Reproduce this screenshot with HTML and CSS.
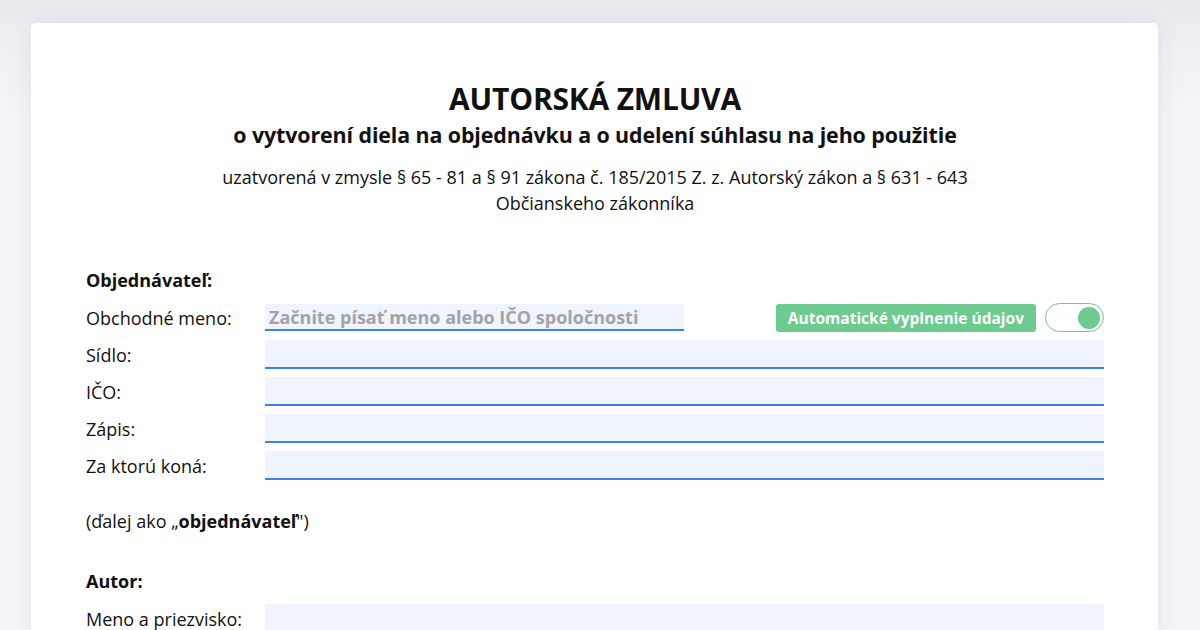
FILE: index.html
```html
<!DOCTYPE html>
<html lang="sk">
<head>
<meta charset="utf-8">
<title>Autorská zmluva</title>
<link rel="stylesheet" href="styles.css">
</head>
<body>
<div class="page">
  <main class="card">
    <header class="head">
      <h1 class="title">AUTORSKÁ ZMLUVA</h1>
      <h2 class="subtitle">o vytvorení diela na objednávku a o udelení súhlasu na jeho použitie</h2>
      <p class="law">uzatvorená v zmysle § 65 - 81 a § 91 zákona č. 185/2015 Z. z. Autorský zákon a § 631 - 643<br>Občianskeho zákonníka</p>
    </header>

    <section class="party">
      <h3 class="party-title">Objednávateľ:</h3>
      <div class="row">
        <label class="label">Obchodné meno:</label>
        <div class="row-main">
          <div class="input input-short"><span class="placeholder">Začnite písať meno alebo IČO spoločnosti</span></div>
          <div class="auto">
            <span class="auto-btn">Automatické vyplnenie údajov</span>
            <span class="toggle"><span class="knob"></span></span>
          </div>
        </div>
      </div>
      <div class="row"><label class="label">Sídlo:</label><div class="input"></div></div>
      <div class="row"><label class="label">IČO:</label><div class="input"></div></div>
      <div class="row"><label class="label">Zápis:</label><div class="input"></div></div>
      <div class="row"><label class="label">Za ktorú koná:</label><div class="input"></div></div>
      <p class="note">(ďalej ako „<b>objednávateľ</b>")</p>
    </section>

    <section class="party party-author">
      <h3 class="party-title">Autor:</h3>
      <div class="row"><label class="label">Meno a priezvisko:</label><div class="input"></div></div>
    </section>
  </main>
</div>
</body>
</html>
```

FILE: styles.css
```css
* { box-sizing: border-box; }
html, body { margin: 0; padding: 0; }
body {
  font-family: "Open Sans", "Noto Sans", sans-serif;
  color: #111;
  background: linear-gradient(to bottom, #e9eaef 0, #eeeff4 40px, #f4f5fa 120px);
  height: 630px;
  overflow: hidden;
}
.page {
  padding: 23px 42px 0 31px;
}
.card {
  background: #fff;
  border-radius: 5px;
  box-shadow: 0 0 24px rgba(40, 45, 80, 0.08);
  padding: 56px 54px 60px 55px;
  height: 620px;
  overflow: hidden;
}
.head { text-align: center; }
.title {
  margin: 0;
  font-size: 30px;
  line-height: 40px;
  font-weight: 700;
  letter-spacing: -0.2px;
}
.subtitle {
  margin: 0;
  font-size: 21.4px;
  line-height: 32px;
  font-weight: 700;
  letter-spacing: -0.1px;
}
.law {
  margin: 13px 0 0;
  font-size: 18px;
  line-height: 26px;
}
.party { margin-top: 51px; }
.party-author { margin-top: 34px; }
.party-title {
  margin: 0 0 10px;
  font-size: 18px;
  line-height: 26px;
  font-weight: 700;
}
.row {
  display: grid;
  grid-template-columns: 179px 1fr;
  align-items: center;
  margin-bottom: 8px;
}
.label {
  font-size: 18px;
  line-height: 26px;
}
.input {
  height: 29px;
  background: #f0f4fc;
  border-bottom: 2px solid #3b7ff0;
}
.row-main {
  display: flex;
  align-items: center;
}
.input-short {
  width: 419px;
  height: 27px;
  display: flex;
  align-items: center;
  padding-left: 4px;
}
.placeholder {
  color: #a3a3a8;
  font-weight: 700;
  font-size: 18px;
  white-space: nowrap;
}
.auto {
  margin-left: auto;
  display: flex;
  align-items: center;
  gap: 9px;
}
.auto-btn {
  background: #6dcb90;
  color: #fff;
  font-weight: 700;
  font-size: 15.5px;
  height: 28px;
  line-height: 28px;
  padding: 0 12px;
  border-radius: 3px;
  white-space: nowrap;
}
.toggle {
  width: 59px;
  height: 29px;
  border: 1.5px solid #6dcb90;
  border-radius: 15px;
  display: flex;
  align-items: center;
  justify-content: flex-end;
  padding-right: 3px;
}
.knob {
  width: 22px;
  height: 22px;
  border-radius: 50%;
  background: #6dcb90;
}
.note {
  margin: 28px 0 0;
  font-size: 18px;
  line-height: 26px;
}
.note b { font-weight: 700; }
```
